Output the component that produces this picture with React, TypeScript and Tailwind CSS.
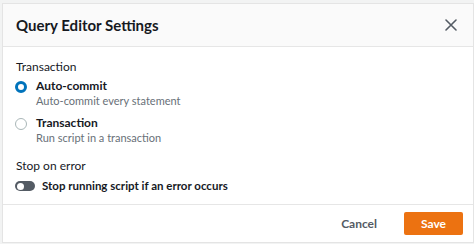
import React from 'react';

export default function App() {
  return (
    <div className="w-[474px] h-[244px] bg-[#f2f3f3] pt-[3px] pl-[2px] overflow-hidden" style={{ fontFamily: 'Lato, "Noto Sans", sans-serif' }}>
      <div className="h-[240px] w-[472px] bg-white border border-[#e4e4e4] flex flex-col">
        {/* Header */}
        <div className="h-[43px] bg-[#fafafa] border-b border-[#e6e6e6] flex items-center justify-between pl-[13px] pr-[14px]">
          <div className="text-[15px] font-bold text-[#16191f]">Query Editor Settings</div>
          <svg width="12" height="12" viewBox="0 0 12 12" className="mr-[2px]">
            <path d="M1 1L11 11M11 1L1 11" stroke="#545b64" strokeWidth="1.6" strokeLinecap="round" />
          </svg>
        </div>

        {/* Body */}
        <div className="flex-1 px-[12px] pt-[12px]">
          <div className="pl-[1px] text-[12px] text-[#16191f] leading-[16px]">Transaction</div>
          <div className="mt-[3px] flex flex-col gap-[7px]">
            <div className="flex items-start gap-[9px]">
              <div className="mt-[3px] w-[12px] h-[12px] rounded-full border-[3.5px] border-[#0073bb] bg-white" />
              <div>
                <div className="text-[12px] font-bold text-[#16191f] leading-[16px]">Auto-commit</div>
                <div className="text-[11px] text-[#687078] leading-[14px]">Auto-commit every statement</div>
              </div>
            </div>
            <div className="flex items-start gap-[9px]">
              <div className="mt-[3px] w-[12px] h-[12px] rounded-full border border-[#aab7b8] bg-white" />
              <div>
                <div className="text-[12px] font-bold text-[#16191f] leading-[16px]">Transaction</div>
                <div className="text-[11px] text-[#687078] leading-[14px]">Run script in a transaction</div>
              </div>
            </div>
          </div>

          <div className="pl-[1px] mt-[13px] text-[12px] text-[#16191f] leading-[16px]">Stop on error</div>
          <div className="mt-[4px] flex items-center gap-[7px]">
            <div className="w-[20px] h-[10px] rounded-full bg-[#545b64] flex items-center pl-[1.5px]">
              <div className="w-[7px] h-[7px] rounded-full bg-white" />
            </div>
            <div className="text-[11.5px] font-bold text-[#16191f] leading-[16px]">Stop running script if an error occurs</div>
          </div>
        </div>

        {/* Footer */}
        <div className="h-[38px] border-t border-[#e6e6e6] flex items-center justify-end pr-[10px] gap-[27px]">
          <div className="text-[12px] font-bold text-[#545b64]">Cancel</div>
          <div className="w-[59px] h-[23px] bg-[#ec7211] rounded-[2px] flex items-center justify-center text-[12px] font-bold text-white">Save</div>
        </div>
      </div>
    </div>
  );
}
